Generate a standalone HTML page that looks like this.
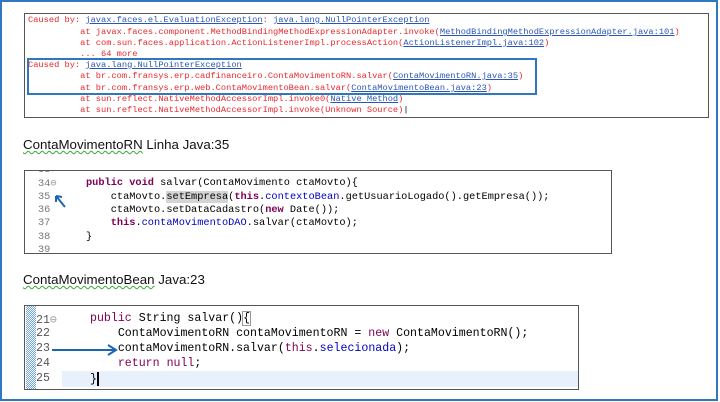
<!DOCTYPE html>
<html><head><meta charset="utf-8"><style>
*{margin:0;padding:0;box-sizing:border-box}
body{width:720px;height:402px;background:#fff;position:relative;overflow:hidden;font-family:"Liberation Sans",sans-serif}
.outer{position:absolute;left:0;top:0;width:718px;height:401px;border:2px solid #2f78c0}
.box{position:absolute;border:1px solid #555;background:#fff}
.l{position:absolute;white-space:pre;font-family:"Liberation Mono",monospace}
.r{color:#e8282c}
.u{color:#2a55b8;text-decoration:underline}
.k{color:#7f0055;font-weight:bold}
.f{color:#0000c0}
.n{color:#787878}
.h{position:absolute;font-size:13.3px;color:#111;letter-spacing:0}
.sq{text-decoration:underline wavy #3a3;text-decoration-thickness:1px}
</style></head><body>
<div class="outer"></div>

<div class="box" style="left:24px;top:13px;width:685px;height:105px"></div>
<div style="position:absolute;left:27px;top:58px;width:510px;height:37px;border:2px solid #2f78c0"></div>
<div style="font-size:8.7px">
<div class="l r" style="left:28px;top:15px">Caused by: <span class="u">javax.faces.el.EvaluationException</span>: <span class="u">java.lang.NullPointerException</span></div>
<div class="l r" style="left:28px;top:27px">          at javax.faces.component.MethodBindingMethodExpressionAdapter.invoke(<span class="u">MethodBindingMethodExpressionAdapter.java:101</span>)</div>
<div class="l r" style="left:28px;top:38px">          at com.sun.faces.application.ActionListenerImpl.processAction(<span class="u">ActionListenerImpl.java:102</span>)</div>
<div class="l r" style="left:28px;top:49px">          ... 64 more</div>
<div class="l r" style="left:28px;top:60px">Caused by: <span class="u">java.lang.NullPointerException</span></div>
<div class="l r" style="left:28px;top:71px">          at br.com.fransys.erp.cadfinanceiro.ContaMovimentoRN.salvar(<span class="u">ContaMovimentoRN.java:35</span>)</div>
<div class="l r" style="left:28px;top:83px">          at br.com.fransys.erp.web.ContaMovimentoBean.salvar(<span class="u">ContaMovimentoBean.java:23</span>)</div>
<div class="l r" style="left:28px;top:94px">          at sun.reflect.NativeMethodAccessorImpl.invoke0(<span class="u">Native Method</span>)</div>
<div class="l r" style="left:28px;top:105px">          at sun.reflect.NativeMethodAccessorImpl.invoke(Unknown Source)<span style="color:#000">|</span></div>
</div>

<div class="h" style="left:23px;top:137px"><span class="sq">ContaMovimentoRN</span> Linha Java:35</div>

<div class="box" style="left:24px;top:170px;width:588px;height:84px;overflow:hidden">
<div style="font-size:10.3px">
<div class="l n" style="left:13px;top:-7px">33</div>
<div class="l n" style="left:13px;top:6px">34<span style="color:#999">⊖</span></div>
<div class="l n" style="left:13px;top:20px">35</div>
<div class="l n" style="left:13px;top:33px">36</div>
<div class="l n" style="left:13px;top:46px">37</div>
<div class="l n" style="left:13px;top:60px">38</div>
<div class="l n" style="left:13px;top:73px">39</div>
<div class="l" style="left:61px;top:6px"><span class="k">public void</span> salvar(ContaMovimento ctaMovto){</div>
<div class="l" style="left:61px;top:20px">    ctaMovto.<span style="background:#d4d4d4">setEmpresa</span>(<span class="k">this</span>.<span class="f">contextoBean</span>.getUsuarioLogado().getEmpresa());</div>
<div class="l" style="left:61px;top:33px">    ctaMovto.setDataCadastro(<span class="k">new</span> Date());</div>
<div class="l" style="left:61px;top:46px">    <span class="k">this</span>.<span class="f">contaMovimentoDAO</span>.salvar(ctaMovto);</div>
<div class="l" style="left:61px;top:60px">}</div>
</div>
<svg style="position:absolute;left:28px;top:22px" width="14" height="16"><path d="M12 14 L3 3 M3 3 L3 9 M3 3 L9 4" stroke="#1e64b4" stroke-width="2" fill="none"/></svg>
</div>

<div class="h" style="left:23px;top:272px"><span class="sq">ContaMovimentoBean</span> Java:23</div>

<div class="box" style="left:24px;top:305px;width:555px;height:85px;overflow:hidden">
<div style="position:absolute;left:1px;top:0;width:10px;height:85px;background:repeating-conic-gradient(#6fa4e0 0 25%,#fff 0 50%) 0 0/2px 2px"></div>
<div style="position:absolute;left:37px;top:65px;width:520px;height:16px;background:#e8f0fb"></div>
<div style="font-size:11.6px">
<div class="l n" style="left:11px;top:-9px">20</div>
<div class="l" style="left:11px;top:6px;color:#555">21<span style="color:#999">⊖</span></div>
<div class="l" style="left:11px;top:21px;color:#555">22</div>
<div class="l" style="left:11px;top:36px;color:#555">23</div>
<div class="l" style="left:11px;top:51px;color:#555">24</div>
<div class="l" style="left:11px;top:66px;color:#555">25</div>
<div class="l" style="left:65px;top:6px"><span class="k" style="font-weight:normal">public</span> String salvar()<span style="outline:1px solid #999">{</span></div>
<div class="l" style="left:65px;top:21px">    ContaMovimentoRN contaMovimentoRN = <span class="k" style="font-weight:normal">new</span> ContaMovimentoRN();</div>
<div class="l" style="left:65px;top:36px">    contaMovimentoRN.salvar(<span class="k" style="font-weight:normal">this</span>.<span class="f">selecionada</span>);</div>
<div class="l" style="left:65px;top:51px">    <span class="k" style="font-weight:normal">return</span> <span class="k" style="font-weight:normal">null</span>;</div>
<div class="l" style="left:65px;top:66px">}<span style="border-left:2px solid #000;height:14px;display:inline-block;vertical-align:middle"></span></div>
</div>
<svg style="position:absolute;left:27px;top:38px" width="70" height="12"><path d="M0 6 L64 6 M56 1 L64 6 L56 11" stroke="#1e64b4" stroke-width="2" fill="none"/></svg>
</div>
</body></html>
